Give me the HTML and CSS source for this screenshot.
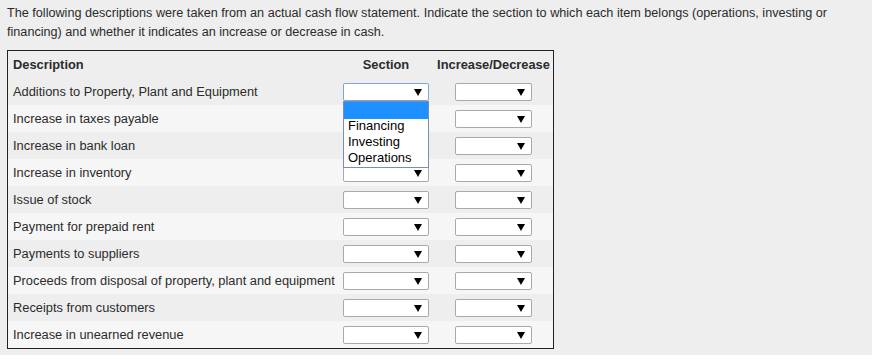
FILE: index.html
```html
<!DOCTYPE html>
<html>
<head>
<meta charset="utf-8">
<link rel="stylesheet" href="styles.css">
</head>
<body>
<div class="page">
  <p class="intro">The following descriptions were taken from an actual cash flow statement. Indicate the section to which each item belongs (operations, investing or financing) and whether it indicates an increase or decrease in cash.</p>
  <table class="grid">
    <thead>
      <tr><th class="desc">Description</th><th class="sec">Section</th><th class="inc">Increase/Decrease</th></tr>
    </thead>
    <tbody>
      <tr><td class="desc">Additions to Property, Plant and Equipment</td><td class="sec"><span class="sel sel-sec focused"><svg class="arr" viewBox="0 0 8 7"><path d="M0 0H8L4 7Z"/></svg><span class="dropdown"><span class="opt hl"></span><span class="opt">Financing</span><span class="opt">Investing</span><span class="opt">Operations</span></span></span></td><td class="inc"><span class="sel sel-inc"><svg class="arr" viewBox="0 0 8 7"><path d="M0 0H8L4 7Z"/></svg></span></td></tr>
      <tr><td class="desc">Increase in taxes payable</td><td class="sec"><span class="sel sel-sec"><svg class="arr" viewBox="0 0 8 7"><path d="M0 0H8L4 7Z"/></svg></span></td><td class="inc"><span class="sel sel-inc"><svg class="arr" viewBox="0 0 8 7"><path d="M0 0H8L4 7Z"/></svg></span></td></tr>
      <tr><td class="desc">Increase in bank loan</td><td class="sec"><span class="sel sel-sec"><svg class="arr" viewBox="0 0 8 7"><path d="M0 0H8L4 7Z"/></svg></span></td><td class="inc"><span class="sel sel-inc"><svg class="arr" viewBox="0 0 8 7"><path d="M0 0H8L4 7Z"/></svg></span></td></tr>
      <tr><td class="desc">Increase in inventory</td><td class="sec"><span class="sel sel-sec"><svg class="arr" viewBox="0 0 8 7"><path d="M0 0H8L4 7Z"/></svg></span></td><td class="inc"><span class="sel sel-inc"><svg class="arr" viewBox="0 0 8 7"><path d="M0 0H8L4 7Z"/></svg></span></td></tr>
      <tr><td class="desc">Issue of stock</td><td class="sec"><span class="sel sel-sec"><svg class="arr" viewBox="0 0 8 7"><path d="M0 0H8L4 7Z"/></svg></span></td><td class="inc"><span class="sel sel-inc"><svg class="arr" viewBox="0 0 8 7"><path d="M0 0H8L4 7Z"/></svg></span></td></tr>
      <tr><td class="desc">Payment for prepaid rent</td><td class="sec"><span class="sel sel-sec"><svg class="arr" viewBox="0 0 8 7"><path d="M0 0H8L4 7Z"/></svg></span></td><td class="inc"><span class="sel sel-inc"><svg class="arr" viewBox="0 0 8 7"><path d="M0 0H8L4 7Z"/></svg></span></td></tr>
      <tr><td class="desc">Payments to suppliers</td><td class="sec"><span class="sel sel-sec"><svg class="arr" viewBox="0 0 8 7"><path d="M0 0H8L4 7Z"/></svg></span></td><td class="inc"><span class="sel sel-inc"><svg class="arr" viewBox="0 0 8 7"><path d="M0 0H8L4 7Z"/></svg></span></td></tr>
      <tr><td class="desc">Proceeds from disposal of property, plant and equipment</td><td class="sec"><span class="sel sel-sec"><svg class="arr" viewBox="0 0 8 7"><path d="M0 0H8L4 7Z"/></svg></span></td><td class="inc"><span class="sel sel-inc"><svg class="arr" viewBox="0 0 8 7"><path d="M0 0H8L4 7Z"/></svg></span></td></tr>
      <tr><td class="desc">Receipts from customers</td><td class="sec"><span class="sel sel-sec"><svg class="arr" viewBox="0 0 8 7"><path d="M0 0H8L4 7Z"/></svg></span></td><td class="inc"><span class="sel sel-inc"><svg class="arr" viewBox="0 0 8 7"><path d="M0 0H8L4 7Z"/></svg></span></td></tr>
      <tr><td class="desc">Increase in unearned revenue</td><td class="sec"><span class="sel sel-sec"><svg class="arr" viewBox="0 0 8 7"><path d="M0 0H8L4 7Z"/></svg></span></td><td class="inc"><span class="sel sel-inc"><svg class="arr" viewBox="0 0 8 7"><path d="M0 0H8L4 7Z"/></svg></span></td></tr>
    </tbody>
  </table>
</div>
</body>
</html>
```
FILE: styles.css
```css
html, body {
  margin: 0;
  padding: 0;
  background: #ffffff;
}
.page {
  width: 872px;
  height: 355px;
  box-sizing: border-box;
  background: #eeeeee;
  padding: 4px 7px 0 7px;
  font-family: "Liberation Sans", Arial, sans-serif;
  font-size: 12.65px;
  color: #2b2b2b;
}
.intro {
  margin: 0 0 8px 0;
  line-height: 19px;
}
.grid {
  border-collapse: collapse;
  border: 1px solid #222222;
  width: 547px;
  font-size: 12.85px;
}
.grid th, .grid td {
  height: 27px;
  padding: 0;
  vertical-align: middle;
  white-space: nowrap;
}
.grid th {
  font-weight: bold;
  text-align: center;
}
.grid th.desc, .grid td.desc {
  text-align: left;
  padding-left: 5px;
  width: 325px;
}
.grid td.sec, .grid td.inc {
  text-align: center;
}
.grid th.sec { width: 96px; }
.grid thead tr { background: #eeeeee; }
.grid tbody tr:nth-child(odd) { background: #eeeeee; }
.grid tbody tr:nth-child(even) { background: #f6f6f6; }
.sel {
  position: relative;
  display: inline-block;
  vertical-align: middle;
  height: 18px;
  box-sizing: border-box;
  background: #ffffff;
  border: 1px solid #a9a9a9;
  border-radius: 2px;
}
.sel-sec { width: 86px; }
.sel-inc { width: 77px; }
.sel.focused { border-color: #7ea4d8; }
.arr {
  position: absolute;
  right: 6px;
  top: 5px;
  width: 8px;
  height: 7px;
  fill: #000000;
}
.dropdown {
  position: absolute;
  left: -1px;
  top: 17px;
  width: 86px;
  box-sizing: border-box;
  background: #ffffff;
  border: 1px solid #7a8fad;
  display: flex;
  flex-direction: column;
  text-align: left;
  z-index: 2;
}
.opt {
  display: block;
  height: 16px;
  line-height: 14px;
  padding-left: 4px;
  color: #000000;
  font-size: 13px;
}
.opt.hl {
  height: 17px;
  background: #1e90ff;
}
```
